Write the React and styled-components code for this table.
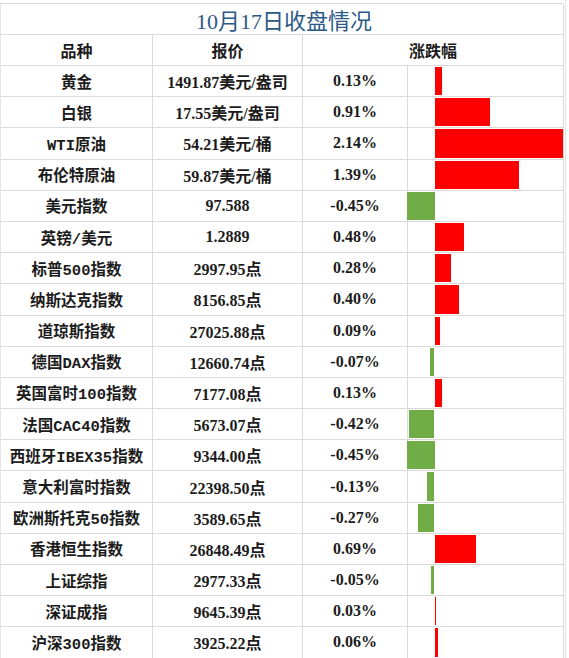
import React from "react";
import styled, { createGlobalStyle } from "styled-components";

const GlobalStyle = createGlobalStyle`
  body {
    margin: 0;
    background: #ffffff;
    font-family: "Liberation Serif", "Noto Sans CJK SC", serif;
    color: #1c1c1c;
  }
`;

const rows = [
  ["黄金", "1491.87美元/盎司", 0.13],
  ["白银", "17.55美元/盎司", 0.91],
  ["WTI原油", "54.21美元/桶", 2.14],
  ["布伦特原油", "59.87美元/桶", 1.39],
  ["美元指数", "97.588", -0.45],
  ["英镑/美元", "1.2889", 0.48],
  ["标普500指数", "2997.95点", 0.28],
  ["纳斯达克指数", "8156.85点", 0.4],
  ["道琼斯指数", "27025.88点", 0.09],
  ["德国DAX指数", "12660.74点", -0.07],
  ["英国富时100指数", "7177.08点", 0.13],
  ["法国CAC40指数", "5673.07点", -0.42],
  ["西班牙IBEX35指数", "9344.00点", -0.45],
  ["意大利富时指数", "22398.50点", -0.13],
  ["欧洲斯托克50指数", "3589.65点", -0.27],
  ["香港恒生指数", "26848.49点", 0.69],
  ["上证综指", "2977.33点", -0.05],
  ["深证成指", "9645.39点", 0.03],
  ["沪深300指数", "3925.22点", 0.06],
];

const ZERO = 26.5;
const SCALE = 60.5;

const Page = styled.div`
  padding-top: 3px;
  width: 565px;
  border-right: 1px solid #e4e4e4;
`;

const Table = styled.div`
  display: grid;
  grid-template-columns: 152px 150px 105px 156px;
  grid-template-rows: 31px 31px repeat(19, 31.2px);
  width: 563px;
  border-top: 1px solid #dadada;
  border-left: 1px solid #e6e6e6;
  box-sizing: border-box;
`;

const Cell = styled.div`
  box-sizing: border-box;
  border-right: 1px solid #dadada;
  border-bottom: 1px solid #dadada;
  display: flex;
  align-items: center;
  justify-content: center;
  font-size: 16px;
  font-weight: 700;
  white-space: nowrap;
  grid-column: ${(p) => p.$span || "auto"};
`;

const Title = styled(Cell)`
  grid-column: 1 / -1;
  font-size: 22px;
  font-weight: 400;
  color: #2b5a86;
  padding-left: 4px;
`;

const Label = styled(Cell)`
  font-family: "Liberation Mono", "Noto Sans CJK SC", monospace;
  font-size: 15.5px;
`;

const ChartCell = styled(Cell)`
  justify-content: flex-start;
  align-items: stretch;
  padding: 1px 0;
`;

const Bar = styled.div`
  background: ${(p) => (p.$down ? "#70ad47" : "#ff0000")};
`;

const fmt = (v) => `${v < 0 ? "-" : ""}${Math.abs(v).toFixed(2)}%`;

export default function App() {
  return (
    <Page>
      <GlobalStyle />
      <Table>
        <Title>10月17日收盘情况</Title>
        <Cell>品种</Cell>
        <Cell>报价</Cell>
        <Cell $span="span 2">涨跌幅</Cell>
        {rows.map(([name, price, chg]) => {
          const w = Math.max(Math.abs(chg) * SCALE, 1.5);
          const left = chg < 0 ? ZERO - w : ZERO;
          return (
            <React.Fragment key={name}>
              <Label>{name}</Label>
              <Cell>{price}</Cell>
              <Cell>{fmt(chg)}</Cell>
              <ChartCell>
                <Bar $down={chg < 0} style={{ marginLeft: left, width: w }} />
              </ChartCell>
            </React.Fragment>
          );
        })}
      </Table>
    </Page>
  );
}
